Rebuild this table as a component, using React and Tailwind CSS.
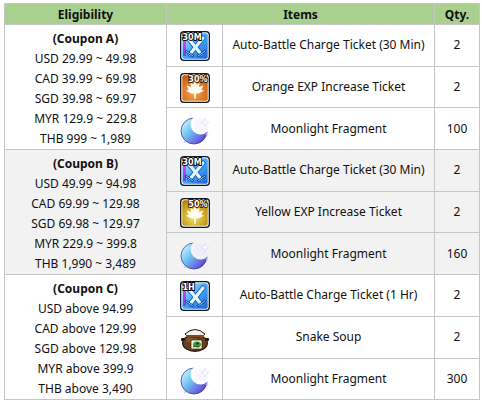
import React from 'react';

// icone disegnate a mano
function TicketIcon({ label, id }) {
  return (
    <svg width="32" height="32" viewBox="0 0 32 32">
      <defs>
        <linearGradient id={`tk-${id}`} x1="0" y1="0" x2="1" y2="1">
          <stop offset="0" stopColor="#c9efff" />
          <stop offset="0.5" stopColor="#46a8f7" />
          <stop offset="1" stopColor="#1f62d8" />
        </linearGradient>
        <linearGradient id={`pp-${id}`} x1="0" y1="0" x2="0" y2="1">
          <stop offset="0" stopColor="#f040e8" />
          <stop offset="1" stopColor="#6a44f2" />
        </linearGradient>
      </defs>
      <rect x="1" y="1" width="30" height="30" rx="4" fill="#101828" />
      <rect x="2.3" y="2.3" width="27.4" height="27.4" rx="3" fill="#eaf7ff" />
      <rect x="3.3" y="3.3" width="25.4" height="25.4" rx="2" fill={`url(#tk-${id})`} />
      <rect x="4" y="9" width="3" height="17" fill={`url(#pp-${id})`} />
      <g strokeLinecap="round">
        <line x1="9" y1="8" x2="22" y2="24" stroke="#1a5ccc" strokeWidth="5" />
        <line x1="24" y1="8" x2="11" y2="24" stroke="#1a5ccc" strokeWidth="5" />
        <line x1="9" y1="8" x2="22" y2="24" stroke="#e2f9ff" strokeWidth="3.2" />
        <line x1="24" y1="8" x2="11" y2="24" stroke="#e2f9ff" strokeWidth="3.2" />
        <line x1="7" y1="21" x2="14" y2="26" stroke="#0d3a95" strokeWidth="2.2" />
        <line x1="19" y1="26" x2="26" y2="21" stroke="#0d3a95" strokeWidth="2.2" />
        <line x1="7" y1="21" x2="14" y2="26" stroke="#9fe2ff" strokeWidth="0.9" />
        <line x1="19" y1="26" x2="26" y2="21" stroke="#9fe2ff" strokeWidth="0.9" />
      </g>
      <text x="3.5" y="9.5" fontSize="8" fontWeight="700" fontFamily="'DejaVu Sans', sans-serif" fill="#fff" stroke="#000" strokeWidth="1.8" paintOrder="stroke">{label}</text>
    </svg>
  );
}

function ExpIcon({ label, id, yellow }) {
  const c1 = yellow ? '#fbe46a' : '#f6ae5a';
  const c2 = yellow ? '#b08600' : '#c65a0a';
  return (
    <svg width="32" height="32" viewBox="0 0 32 32">
      <defs>
        <radialGradient id={`ex-${id}`} cx="0.45" cy="0.65" r="0.7">
          <stop offset="0" stopColor={c1} />
          <stop offset="1" stopColor={c2} />
        </radialGradient>
      </defs>
      <rect x="1" y="1" width="30" height="30" rx="4" fill="#101828" />
      <rect x="2.3" y="2.3" width="27.4" height="27.4" rx="3" fill="#fff6e0" />
      <rect x="3.3" y="3.3" width="25.4" height="25.4" rx="2" fill={`url(#ex-${id})`} />
      <path
        d="M16 8 L17.8 12.5 L20.5 11 L20 15 L24.5 13.5 L22.2 17.5 L25 18.8 L19.5 21.5 L17 21.5 L16.7 27 L15.3 27 L15 21.5 L12.5 21.5 L7 18.8 L9.8 17.5 L7.5 13.5 L12 15 L11.5 11 L14.2 12.5 Z"
        fill="#fffaf0"
      />
      <text x="28.5" y="10" textAnchor="end" fontSize="8" fontWeight="700" fontFamily="'DejaVu Sans', sans-serif" fill="#fff" stroke="#3a1a00" strokeWidth="1.8" paintOrder="stroke">{label}</text>
    </svg>
  );
}

function MoonIcon({ id }) {
  return (
    <svg width="32" height="32" viewBox="0 0 32 32">
      <defs>
        <linearGradient id={`mn-${id}`} x1="0" y1="0.2" x2="0.9" y2="1">
          <stop offset="0" stopColor="#c4f6ff" />
          <stop offset="0.4" stopColor="#6fc0f0" />
          <stop offset="0.75" stopColor="#6a6ae0" />
          <stop offset="1" stopColor="#4a2fb0" />
        </linearGradient>
        <mask id={`mm-${id}`}>
          <rect width="32" height="32" fill="#fff" />
          <circle cx="21.5" cy="10.5" r="10" fill="#000" />
        </mask>
      </defs>
      <circle cx="22" cy="11" r="7" fill="#ece6ff" opacity="0.35" />
      <circle cx="15" cy="17" r="13" fill={`url(#mn-${id})`} mask={`url(#mm-${id})`} stroke="#3a2a90" strokeWidth="0.7" />
      <path d="M26 4 L27 7.5 L30 8.5 L27 9.5 L26 13 L25 9.5 L22 8.5 L25 7.5 Z" fill="#fff" stroke="#cfc4ff" strokeWidth="0.4" />
      <path d="M28 18 L28.6 19.6 L30 20.2 L28.6 20.8 L28 22.4 L27.4 20.8 L26 20.2 L27.4 19.6 Z" fill="#c8bcff" />
      <circle cx="6" cy="28" r="1" fill="#c9c0ff" />
    </svg>
  );
}

function SoupIcon() {
  return (
    <svg width="32" height="32" viewBox="0 0 32 32">
      <ellipse cx="16" cy="21" rx="13" ry="9" fill="#2a1608" />
      <ellipse cx="16" cy="21" rx="11.8" ry="7.8" fill="#6b3f1e" />
      <ellipse cx="13" cy="18" rx="6" ry="3" fill="#8c5a30" opacity="0.7" />
      <rect x="2" y="16" width="4" height="3" rx="1" fill="#2a1608" />
      <rect x="26" y="16" width="4" height="3" rx="1" fill="#2a1608" />
      <path d="M6 12 Q16 3 26 12 Q24 15 16 15 Q8 15 6 12 Z" fill="#f4f0e6" stroke="#2a1608" strokeWidth="1" />
      <rect x="8" y="13" width="16" height="2" fill="#7a4a22" />
      <rect x="12" y="18" width="11" height="9" rx="1.5" fill="#f3f0e4" stroke="#2a1608" strokeWidth="0.6" />
      <ellipse cx="18" cy="22.5" rx="4" ry="3" fill="#3e9a32" />
      <circle cx="18.5" cy="21.5" r="0.9" fill="#000" />
      <path d="M14 25 Q16 23 20 25" stroke="#1e5e1a" strokeWidth="1" fill="none" />
    </svg>
  );
}

const groups = [
  {
    name: '(Coupon A)',
    lines: ['USD 29.99 ~ 49.98', 'CAD 39.99 ~ 69.98', 'SGD 39.98 ~ 69.97', 'MYR 129.9 ~ 229.8', 'THB 999 ~ 1,989'],
    bg: 'bg-white',
    items: [
      { icon: <TicketIcon label="30M" id="a" />, name: 'Auto-Battle Charge Ticket (30 Min)', qty: '2' },
      { icon: <ExpIcon label="30%" id="a" />, name: 'Orange EXP Increase Ticket', qty: '2' },
      { icon: <MoonIcon id="a" />, name: 'Moonlight Fragment', qty: '100' },
    ],
  },
  {
    name: '(Coupon B)',
    lines: ['USD 49.99 ~ 94.98', 'CAD 69.99 ~ 129.98', 'SGD 69.98 ~ 129.97', 'MYR 229.9 ~ 399.8', 'THB 1,990 ~ 3,489'],
    bg: 'bg-[#f2f2f2]',
    items: [
      { icon: <TicketIcon label="30M" id="b" />, name: 'Auto-Battle Charge Ticket (30 Min)', qty: '2' },
      { icon: <ExpIcon label="50%" id="b" yellow />, name: 'Yellow EXP Increase Ticket', qty: '2' },
      { icon: <MoonIcon id="b" />, name: 'Moonlight Fragment', qty: '160' },
    ],
  },
  {
    name: '(Coupon C)',
    lines: ['USD above 94.99', 'CAD above 129.99', 'SGD above 129.98', 'MYR above 399.9', 'THB above 3,490'],
    bg: 'bg-white',
    items: [
      { icon: <TicketIcon label="1H" id="c" />, name: 'Auto-Battle Charge Ticket (1 Hr)', qty: '2' },
      { icon: <SoupIcon />, name: 'Snake Soup', qty: '2' },
      { icon: <MoonIcon id="c" />, name: 'Moonlight Fragment', qty: '300' },
    ],
  },
];

export default function App() {
  return (
    <div className="bg-white w-[482px] h-[405px] pt-[3px] pl-[4px] font-['Noto_Sans',sans-serif] text-[12px] text-[#111]">
      <table className="border-collapse table-fixed w-[475px]">
        <colgroup>
          <col className="w-[162px]" />
          <col className="w-[56px]" />
          <col className="w-[212px]" />
          <col className="w-[45px]" />
        </colgroup>
        <thead>
          <tr className="bg-[#a9d08e] h-[21px]">
            <th className="border border-[#c6c6c6] font-bold leading-[19px] p-0">Eligibility</th>
            <th colSpan={2} className="border border-[#c6c6c6] font-bold leading-[19px] p-0">Items</th>
            <th className="border border-[#c6c6c6] font-bold leading-[19px] p-0">Qty.</th>
          </tr>
        </thead>
        <tbody>
          {groups.map((g) =>
            g.items.map((it, i) => (
              <tr key={g.name + i} className={`${g.bg} h-[41.7px]`}>
                {i === 0 && (
                  <td rowSpan={3} className="border border-[#c6c6c6] text-center align-middle p-0 pt-[3px]">
                    <div className="font-bold leading-[20px]">{g.name}</div>
                    {g.lines.map((l) => (
                      <div key={l} className="leading-[20px]">{l}</div>
                    ))}
                  </td>
                )}
                <td className="border border-[#c6c6c6] p-0">
                  <div className="flex justify-center pt-[2px]">{it.icon}</div>
                </td>
                <td className="border border-[#c6c6c6] text-center p-0">{it.name}</td>
                <td className="border border-[#c6c6c6] text-center p-0">{it.qty}</td>
              </tr>
            ))
          )}
        </tbody>
      </table>
    </div>
  );
}
